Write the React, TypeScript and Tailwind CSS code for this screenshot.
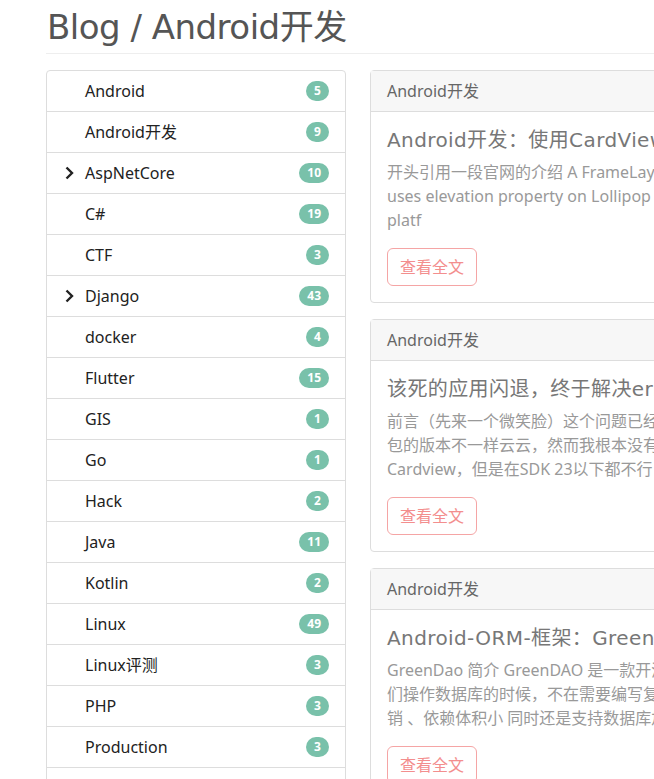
import React from "react";

const cats: { name: string; count: number; sub?: boolean }[] = [
  { name: "Android", count: 5 },
  { name: "Android开发", count: 9 },
  { name: "AspNetCore", count: 10, sub: true },
  { name: "C#", count: 19 },
  { name: "CTF", count: 3 },
  { name: "Django", count: 43, sub: true },
  { name: "docker", count: 4 },
  { name: "Flutter", count: 15 },
  { name: "GIS", count: 1 },
  { name: "Go", count: 1 },
  { name: "Hack", count: 2 },
  { name: "Java", count: 11 },
  { name: "Kotlin", count: 2 },
  { name: "Linux", count: 49 },
  { name: "Linux评测", count: 3 },
  { name: "PHP", count: 3 },
  { name: "Production", count: 3 },
];

const posts = [
  {
    title: "Android开发：使用CardView实现卡片式布局效果",
    lines: [
      "开头引用一段官网的介绍 A FrameLayout with a rounded corner background and shadow. CardView",
      "uses elevation property on Lollipop for shadows and falls back to a custom emulated shadow",
      "platf",
    ],
  },
  {
    title: "该死的应用闪退，终于解决error inflating class CardView",
    lines: [
      "前言（先来一个微笑脸）这个问题已经困扰了我好几天了，网上查找了很多资料，都说是导入的",
      "包的版本不一样云云，然而我根本没有用到什么特殊的控件，只是简单的使用了一个",
      "Cardview，但是在SDK 23以下都不行，一打开就闪退，真的很郁闷",
    ],
  },
  {
    title: "Android-ORM-框架：GreenDao 使用详解",
    lines: [
      "GreenDao 简介 GreenDAO 是一款开源的面向 Android 的轻便、快捷的 ORM 框架，我",
      "们操作数据库的时候，不在需要编写复杂的 SQL语句， 在性能方面，最小的内存开",
      "销 、依赖体积小 同时还是支持数据库加密。",
    ],
  },
];

const Chevron = () => (
  <svg width="11" height="14" viewBox="0 0 11 14" className="shrink-0">
    <path d="M2.5 1.5 L8 7 L2.5 12.5" fill="none" stroke="#222" strokeWidth="2.4" strokeLinejoin="miter" />
  </svg>
);

export default function App() {
  const bodyFont = { fontFamily: '"Noto Sans", "Noto Sans CJK SC", sans-serif' };
  return (
    <div className="w-[654px] h-[779px] overflow-hidden bg-white" style={bodyFont}>
      <div className="w-[1100px] pl-[46px]">
        <h1
          className="text-[34px] leading-[40px] text-[#555] pt-[7px] pb-[6px] pl-px border-b border-[#eee] font-normal"
          style={{ fontFamily: '"DejaVu Sans", "Noto Sans CJK SC", sans-serif', letterSpacing: "-0.5px" }}
        >
          Blog / Android开发
        </h1>
        <div className="flex items-start gap-6 mt-4">
          <ul className="w-[300px] shrink-0 border border-[#ddd] rounded">
            {cats.map((c, i) => (
              <li
                key={c.name}
                className={`flex items-center pr-4 ${i > 0 ? "h-[41px] border-t border-[#ddd]" : "h-10"}`}
              >
                <span className="w-[38px] flex justify-end pr-[10px]">{c.sub ? <Chevron /> : null}</span>
                <span className="flex-1 text-[16px] text-[#222] leading-6">{c.name}</span>
                <span className="h-5 min-w-[23px] px-2 rounded-full bg-[#79c1aa] text-white text-[12px] font-bold flex items-center justify-center leading-none">
                  {c.count}
                </span>
              </li>
            ))}
            <li className="h-[41px] border-t border-[#ddd]" />
          </ul>
          <div className="w-[700px] flex flex-col gap-4">
            {posts.map((p) => (
              <div key={p.title} className="border border-[#ddd] rounded">
                <div className="bg-[#f7f7f7] border-b border-[#ddd] px-4 py-2 text-[16px] leading-6 text-[#666]">
                  Android开发
                </div>
                <div className="px-4 pt-[16px] pb-4">
                  <h2
                    className="text-[20px] leading-6 text-[#777] whitespace-nowrap"
                    style={{ fontFamily: '"DejaVu Sans", "Noto Sans CJK SC", sans-serif', letterSpacing: "0.4px" }}
                  >
                    {p.title}
                  </h2>
                  <div className="mt-2 text-[16px] leading-6 text-[#999]">
                    {p.lines.map((l) => (
                      <div key={l} className="whitespace-nowrap">
                        {l}
                      </div>
                    ))}
                  </div>
                  <button className="mt-4 h-[38px] px-3 rounded-md border border-[#f5a5a5] text-[#f38e8e] text-[16px] leading-6">
                    查看全文
                  </button>
                </div>
              </div>
            ))}
          </div>
        </div>
      </div>
    </div>
  );
}
